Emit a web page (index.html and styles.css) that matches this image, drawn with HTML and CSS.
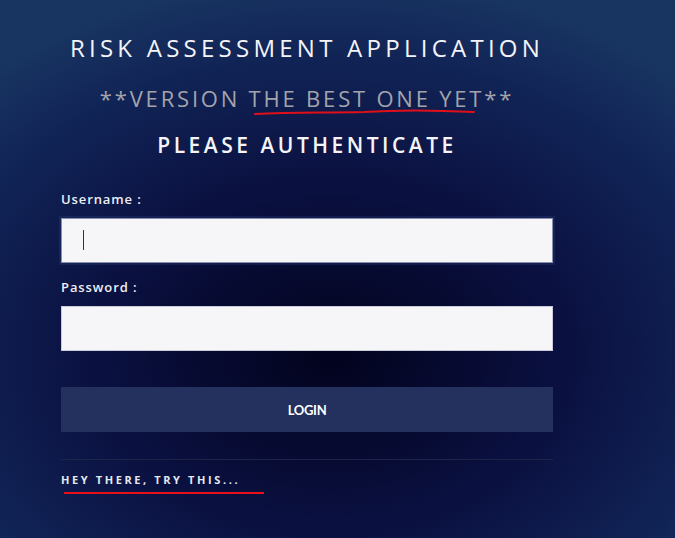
FILE: index.html
```html
<!DOCTYPE html>
<html>
<head>
<meta charset="utf-8">
<link rel="stylesheet" href="styles.css">
</head>
<body>
<div class="page">
  <div class="panel">
    <h1 class="title">RISK ASSESSMENT APPLICATION</h1>
    <h2 class="subtitle">**VERSION THE BEST ONE YET**
      <svg class="scribble" width="222" height="8" viewBox="0 0 222 8"><path d="M1 5 C 40 3, 70 4, 110 3 C 140 1, 180 1, 220 3" stroke="#e0101a" stroke-width="2" fill="none" stroke-linecap="round"/></svg>
    </h2>
    <h2 class="auth">PLEASE AUTHENTICATE</h2>
    <form class="form">
      <label class="label">Username :</label>
      <div class="field focused"><span class="caret"></span></div>
      <label class="label">Password :</label>
      <div class="field"></div>
      <button type="button" class="login">LOGIN</button>
      <div class="divider"></div>
      <div class="hint">HEY THERE, TRY THIS...
        <span class="hint-line"></span>
      </div>
    </form>
  </div>
</div>
</body>
</html>
```
FILE: styles.css
```css
html, body {
  margin: 0;
  padding: 0;
  height: 100%;
}
body {
  background: radial-gradient(ellipse 75% 70% at 49% 66%, #02031d 0%, #0a1040 45%, #112456 80%, #183461 100%);
  font-family: "Open Sans", "Lato", sans-serif;
  color: #fff;
  overflow: hidden;
}
.page {
  padding-top: 33px;
  padding-left: 61px;
}
.panel {
  width: 492px;
  display: flex;
  flex-direction: column;
}
.title {
  margin: 0;
  text-align: center;
  font-size: 24px;
  font-weight: 400;
  letter-spacing: 4.25px;
  line-height: 30px;
  color: #f4f4f8;
  white-space: nowrap;
}
.subtitle {
  position: relative;
  margin: 20px 0 0;
  text-align: center;
  font-size: 22px;
  font-weight: 400;
  letter-spacing: 2.8px;
  line-height: 30px;
  color: #a3a4ab;
  white-space: nowrap;
}
.scribble {
  position: absolute;
  left: 193px;
  top: 26px;
}
.auth {
  margin: 17px 0 0;
  text-align: center;
  font-size: 21px;
  font-weight: 600;
  letter-spacing: 3.5px;
  line-height: 30px;
  color: #f4f4f8;
}
.form {
  display: flex;
  flex-direction: column;
  margin-top: 30px;
}
.label {
  font-size: 13px;
  font-weight: 600;
  letter-spacing: 0.9px;
  color: #eceef4;
  line-height: 18px;
}
.field {
  position: relative;
  height: 43px;
  margin: 10px 0 15px;
  background: #f6f6f9;
  border: 1px solid #c9ccd8;
}
.field.focused {
  border-color: #8a90ac;
  box-shadow: 0 0 0 2px rgba(40, 60, 120, 0.35);
}
.caret {
  position: absolute;
  left: 21px;
  top: 11px;
  width: 1px;
  height: 20px;
  background: #333;
}
.login {
  margin-top: 21px;
  height: 45px;
  border: none;
  background: #24305e;
  color: #fff;
  font-family: "Lato", sans-serif;
  font-weight: 700;
  font-size: 13px;
  letter-spacing: -0.3px;
}
.divider {
  margin-top: 27px;
  height: 1px;
  background: #1c2548;
}
.hint {
  position: relative;
  margin-top: 12px;
  font-size: 11px;
  font-weight: 700;
  letter-spacing: 2.6px;
  color: #e6e8f0;
  line-height: 16px;
}
.hint-line {
  position: absolute;
  left: 3px;
  top: 20px;
  width: 200px;
  height: 2px;
  background: #e8101a;
}
```
